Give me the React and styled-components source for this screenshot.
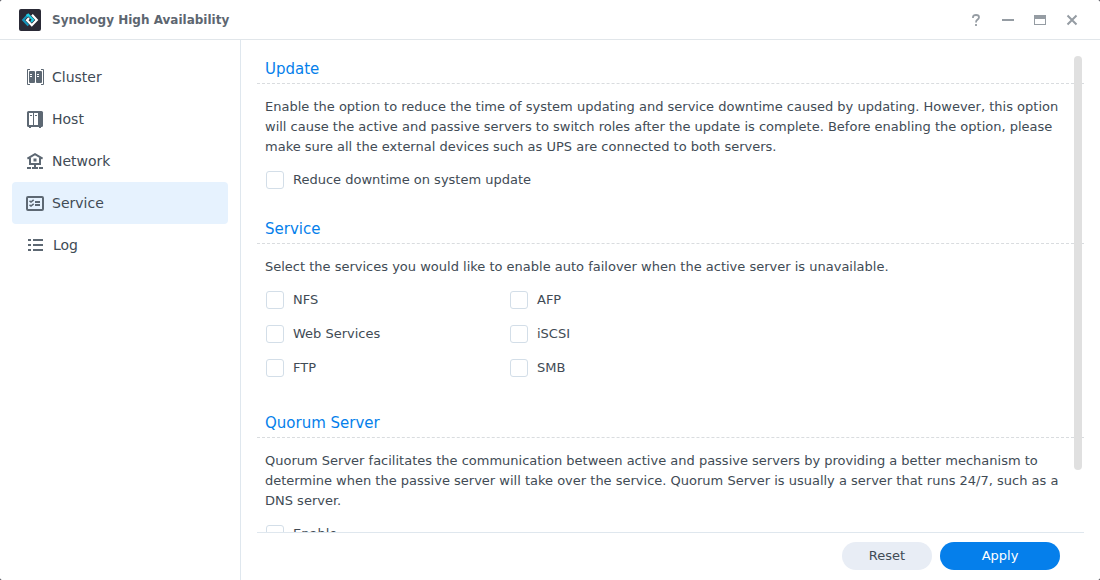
import React, { useState } from 'react';
import styled, { createGlobalStyle } from 'styled-components';

const GlobalStyle = createGlobalStyle`
  * {
    box-sizing: border-box;
  }

  body {
    margin: 0;
    background: #23232f;
    color: #414b55;
    font-family: Verdana, "DejaVu Sans", sans-serif;
    font-size: 13px;
    line-height: 20px;
  }
`;

// Window
const Window = styled.div`
  display: flex;
  flex-direction: column;
  height: 100vh;
  overflow: hidden;
  background: #fff;
  border-radius: 2px;
`;

const TitleBar = styled.header`
  display: flex;
  align-items: center;
  flex: none;
  height: 40px;
  padding: 0 18px 0 19px;
  border-bottom: 1px solid #e1e6ea;
`;

const WindowTitle = styled.h1`
  flex: 1;
  margin: 0 0 0 11px;
  color: #5d6670;
  font-size: 12px;
  font-weight: 700;
`;

const WindowTools = styled.div`
  display: flex;
  gap: 12px;
`;

const ToolButton = styled.button`
  display: flex;
  align-items: center;
  justify-content: center;
  width: 20px;
  height: 20px;
  padding: 0;
  border: 0;
  background: none;
`;

const Body = styled.div`
  display: flex;
  flex: 1;
  min-height: 0;
`;

// Sidebar
const Sidebar = styled.nav`
  flex: none;
  width: 241px;
  padding: 16px 12px;
  border-right: 1px solid #dfe7ee;
`;

const NavLink = styled.a`
  display: flex;
  align-items: center;
  gap: 8px;
  height: 42px;
  padding: 0 14px;
  border-radius: 4px;
  background: ${({ $active }) => ($active ? '#e6f2fe' : 'transparent')};
  color: #414b55;
  font-size: 14px;
  text-decoration: none;
`;

// Content
const Main = styled.main`
  display: flex;
  flex: 1;
  flex-direction: column;
  min-width: 0;
  padding: 16px 16px 0;
`;

const ScrollArea = styled.div`
  position: relative;
  display: flex;
  flex: 1;
  min-height: 0;
`;

const ScrollContent = styled.div`
  flex: 1;
  overflow-y: auto;
  scrollbar-width: none;
`;

const ScrollThumb = styled.div`
  position: absolute;
  top: 0;
  right: 2px;
  width: 8px;
  height: 87%;
  border-radius: 4px;
  background: #e0e0e0;
`;

const Section = styled.section`
  margin-bottom: 22px;
`;

const SectionTitle = styled.h2`
  height: 28px;
  margin: 0 0 13px;
  padding: 0 8px;
  border-bottom: 1px dashed #d9dcdf;
  color: #057feb;
  font-size: 15px;
  font-weight: 400;
  line-height: 26px;
`;

const Description = styled.p`
  margin: 0 0 9px;
  padding: 0 16px 0 8px;
`;

const Options = styled.div`
  display: grid;
  grid-template-columns: 244px 1fr;
  row-gap: 6px;
  padding-bottom: 6px;
`;

const OptionLabel = styled.label`
  display: flex;
  align-items: center;
  gap: 9px;
  height: 28px;
  padding: 0 9px;
`;

const Checkbox = styled.input`
  appearance: none;
  flex: none;
  width: 18px;
  height: 18px;
  margin: 0;
  border: 1px solid #d3dee8;
  border-radius: 3px;
  background: #fff;

  &:checked {
    border-color: #057feb;
    background: #057feb;
  }
`;

const Footer = styled.footer`
  display: flex;
  align-items: flex-start;
  justify-content: flex-end;
  flex: none;
  gap: 8px;
  height: 48px;
  padding: 9px 24px 0 0;
  border-top: 1px solid #dfe7ee;
`;

const Button = styled.button`
  min-width: ${({ $primary }) => ($primary ? '120px' : '90px')};
  height: 28px;
  border: 0;
  border-radius: 14px;
  background: ${({ $primary }) => ($primary ? '#057feb' : '#e8edf5')};
  color: ${({ $primary }) => ($primary ? '#fff' : '#414b55')};
  font: inherit;
`;

// Icons
const Logo = () => (
  <svg width="22" height="22" viewBox="0 0 22 22" fill="none" strokeWidth="2.2" aria-hidden="true">
    <rect width="22" height="22" rx="2" fill="#2a2a36" />
    <path d="M9 5.8 L4.2 11 L9.4 16.4" stroke="#1592b8" />
    <path d="M13 5.8 L17.8 11 L12.8 16.2 L8 11.2 L10 9" stroke="#fff" />
    <path d="M7.6 7 L9.2 5.8 L14 10.8 L12 13" stroke="#20cbe2" />
  </svg>
);

const ClusterIcon = () => (
  <svg width="18" height="18" viewBox="0 0 18 18" fill="#5d6873" aria-hidden="true">
    <path d="M4 1.5H1.5v15H4M15 1.5h2.5v15H15" fill="none" stroke="#5d6873" />
    <rect x="3" y="3" width="6" height="12" rx="1" />
    <rect x="10" y="3" width="6" height="12" rx="1" />
    <path d="M4 6.5h2M4 8.5h2M11 6.5h2M11 8.5h2" stroke="#fff" />
  </svg>
);

const HostIcon = () => (
  <svg width="18" height="18" viewBox="0 0 18 18" fill="#5d6873" aria-hidden="true">
    <rect x="1" y="1" width="16" height="16" rx="1.5" />
    <path d="M3 17h2v1H3zM13 17h2v1h-2z" />
    <path d="M3 3h4v12H3zM8 3h4v12H8z" fill="#fff" />
    <path d="M4 5h2v1H4zM9 5h2v1H9z" />
  </svg>
);

const NetworkIcon = () => (
  <svg width="18" height="18" viewBox="0 0 18 18" fill="none" stroke="#5d6873" strokeWidth="2" aria-hidden="true">
    <path d="M1.4 6.6 L9 2.2 L16.6 6.6" />
    <path d="M4 6v6h10V6" />
    <path d="M7.5 6.5h3v3h-3z" fill="#5d6873" stroke="none" />
    <path d="M9 12v4" />
    <path d="M1 16h4M6 16h6M13 16h4" />
  </svg>
);

const ServiceIcon = () => (
  <svg width="18" height="18" viewBox="0 0 18 18" fill="none" stroke="#5d6873" aria-hidden="true">
    <rect x="1" y="3" width="16" height="13" rx="1" strokeWidth="2" />
    <path d="M3.5 6.8 L5 8 L7.7 5.8 M3.5 10.8 L5 12 L7.7 9.8" strokeWidth="1.6" />
    <path d="M9 8h5M9 11h5" strokeWidth="2" />
  </svg>
);

const LogIcon = () => (
  <svg width="19" height="18" viewBox="0 0 19 18" fill="#5d6873" aria-hidden="true">
    <path d="M2 3h3v2H2zM2 8h3v2H2zM2 13h3v2H2z" />
    <path d="M7 3h10v2H7zM7 8h10v2H7zM7 13h10v2H7z" />
  </svg>
);

const HelpIcon = () => (
  <svg width="14" height="14" viewBox="0 0 14 14" fill="none" stroke="#959ca3" strokeWidth="1.8" aria-hidden="true">
    <path d="M4 5V4q0-2 3-2t3 2.3q0 1.5-1.5 2.3T7 9.5M7 11v2" />
  </svg>
);

const MinimizeIcon = () => (
  <svg width="12" height="12" viewBox="0 0 12 12" aria-hidden="true">
    <path d="M0 5h12v2H0z" fill="#959ca3" />
  </svg>
);

const MaximizeIcon = () => (
  <svg width="12" height="12" viewBox="0 0 12 12" aria-hidden="true">
    <path d="M0 1h12v10H0zM1 5v5h10V5z" fill="#959ca3" fillRule="evenodd" />
  </svg>
);

const CloseIcon = () => (
  <svg width="12" height="12" viewBox="0 0 12 12" aria-hidden="true">
    <path d="M1.5 1.5l9 9M10.5 1.5l-9 9" stroke="#959ca3" strokeWidth="2" />
  </svg>
);

const navItems = [
  { name: 'Cluster', Icon: ClusterIcon },
  { name: 'Host', Icon: HostIcon },
  { name: 'Network', Icon: NetworkIcon },
  { name: 'Service', Icon: ServiceIcon },
  { name: 'Log', Icon: LogIcon },
];

const services = ['NFS', 'AFP', 'Web Services', 'iSCSI', 'FTP', 'SMB'];

const Option = ({ children }) => (
  <OptionLabel>
    <Checkbox type="checkbox" />
    {children}
  </OptionLabel>
);

const App = () => {
  const [page, setPage] = useState('Service');

  return (
    <>
      <GlobalStyle />
      <Window>
        <TitleBar>
          <Logo />
          <WindowTitle>Synology High Availability</WindowTitle>
          <WindowTools>
            <ToolButton aria-label="Help"><HelpIcon /></ToolButton>
            <ToolButton aria-label="Minimize"><MinimizeIcon /></ToolButton>
            <ToolButton aria-label="Maximize"><MaximizeIcon /></ToolButton>
            <ToolButton aria-label="Close"><CloseIcon /></ToolButton>
          </WindowTools>
        </TitleBar>
        <Body>
          <Sidebar>
            {navItems.map(({ name, Icon }) => (
              <NavLink
                key={name}
                href={`#${name.toLowerCase()}`}
                $active={page === name}
                onClick={() => setPage(name)}
              >
                <Icon />
                {name}
              </NavLink>
            ))}
          </Sidebar>
          <Main>
            <ScrollArea>
              <ScrollContent>
                <Section>
                  <SectionTitle>Update</SectionTitle>
                  <Description>
                    Enable the option to reduce the time of system updating and service downtime
                    caused by updating. However, this option will cause the active and passive
                    servers to switch roles after the update is complete. Before enabling the
                    option, please make sure all the external devices such as UPS are connected
                    to both servers.
                  </Description>
                  <Option>Reduce downtime on system update</Option>
                </Section>
                <Section>
                  <SectionTitle>Service</SectionTitle>
                  <Description>
                    Select the services you would like to enable auto failover when the active
                    server is unavailable.
                  </Description>
                  <Options>
                    {services.map((service) => (
                      <Option key={service}>{service}</Option>
                    ))}
                  </Options>
                </Section>
                <Section>
                  <SectionTitle>Quorum Server</SectionTitle>
                  <Description>
                    Quorum Server facilitates the communication between active and passive servers
                    by providing a better mechanism to determine when the passive server will take
                    over the service. Quorum Server is usually a server that runs 24/7, such as a
                    DNS server.
                  </Description>
                  <Option>Enable</Option>
                </Section>
              </ScrollContent>
              <ScrollThumb />
            </ScrollArea>
            <Footer>
              <Button type="button">Reset</Button>
              <Button type="button" $primary>Apply</Button>
            </Footer>
          </Main>
        </Body>
      </Window>
    </>
  );
};

export default App;
